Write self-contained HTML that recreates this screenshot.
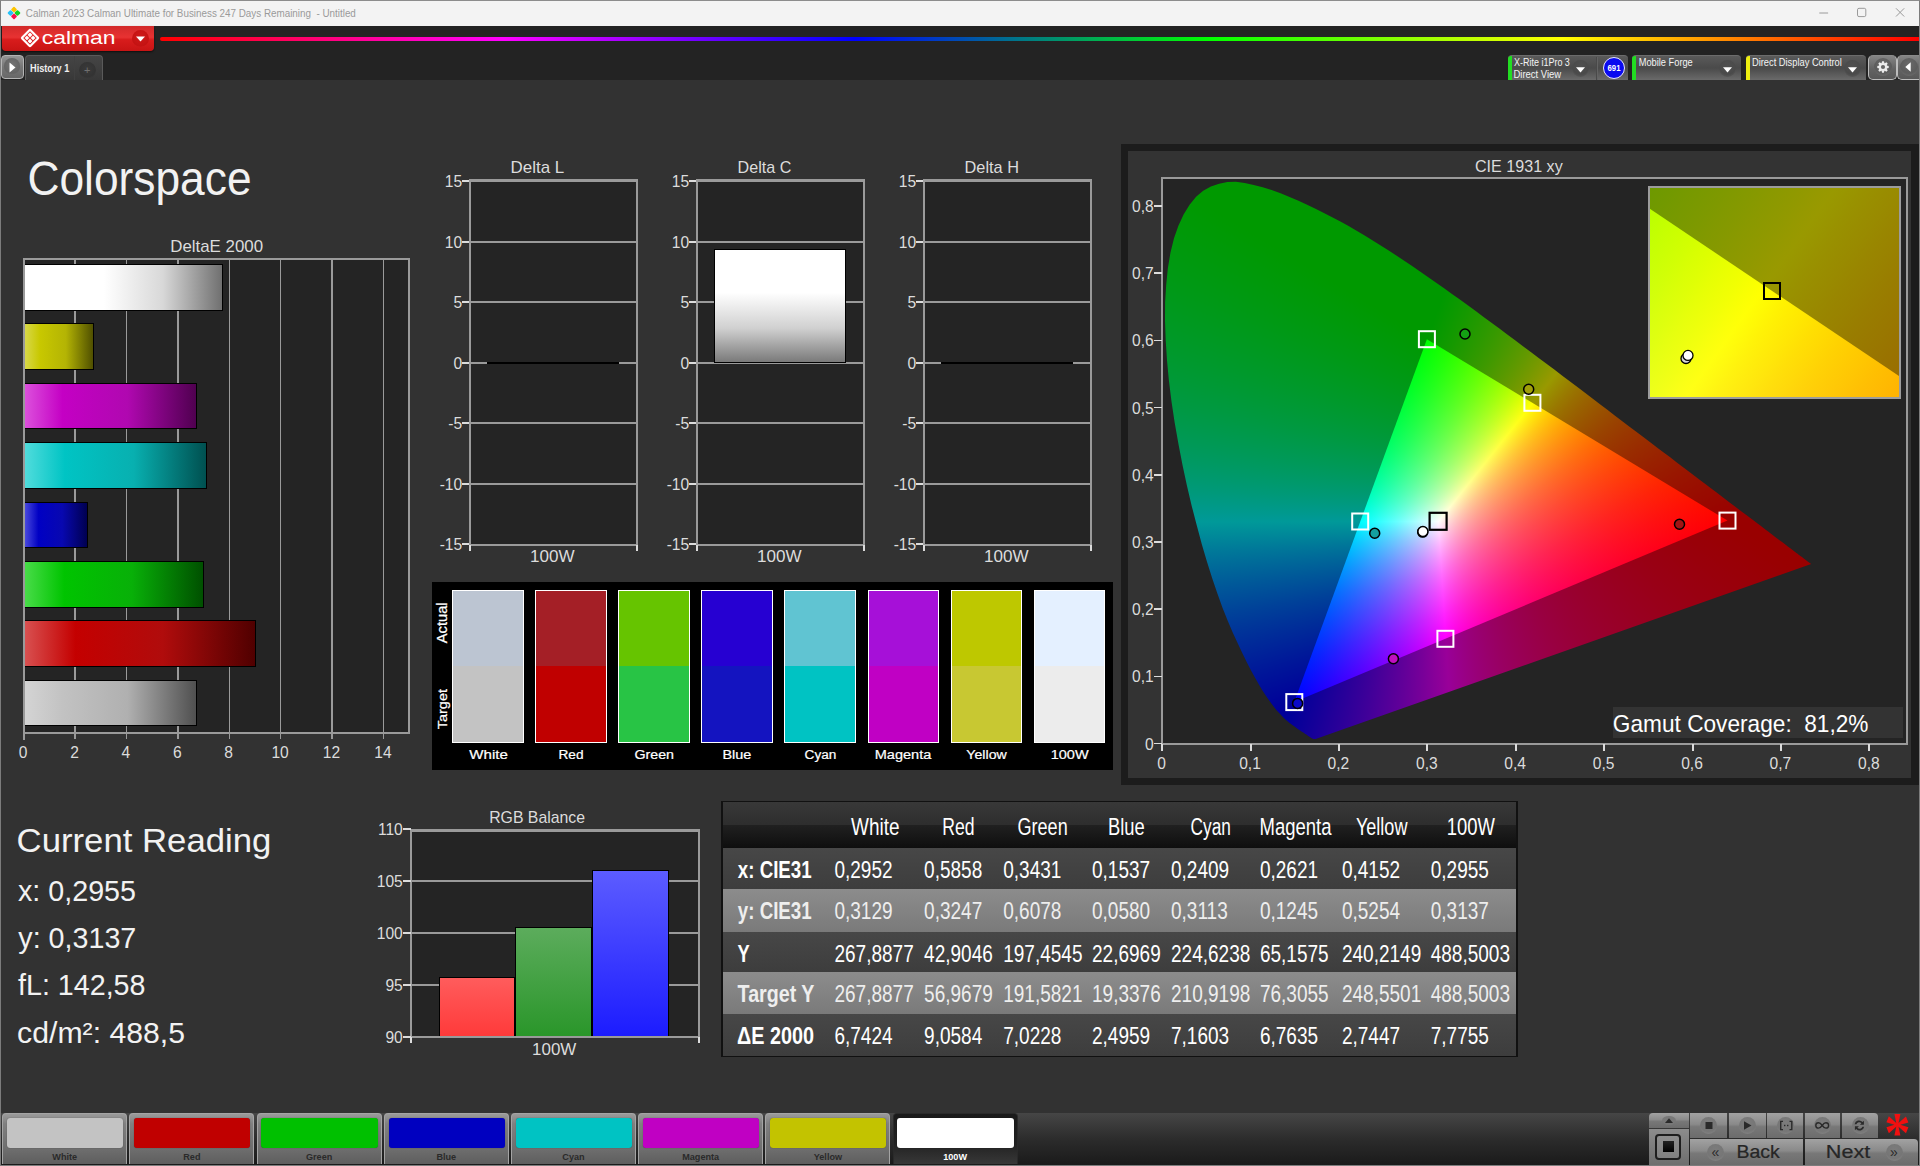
<!DOCTYPE html><html><head><meta charset="utf-8"><title>Calman</title><style>html,body{margin:0;padding:0}body{width:1920px;height:1166px;position:relative;overflow:hidden;background:#323232;font-family:"Liberation Sans",sans-serif}body>div,body>svg{position:absolute}svg text{font-family:"Liberation Sans",sans-serif}</style></head><body>
<div style="left:0px;top:0px;width:1920px;height:27px;background:#f3f3f3"></div>
<div style="left:0px;top:26px;width:1920px;height:54px;background:#232323"></div>
<svg style="left:6.4px;top:4.5px" width="16" height="16" viewBox="0 0 16 16"><g transform="translate(8 8) rotate(45)"><rect x="-4.7" y="-4.7" width="4.5" height="4.5" rx=".9" fill="#fcc400"/><rect x="0.2" y="-4.7" width="4.5" height="4.5" rx=".9" fill="#12d424"/><rect x="-4.7" y="0.2" width="4.5" height="4.5" rx=".9" fill="#25c1f8"/><rect x="0.2" y="0.2" width="4.5" height="4.5" rx=".9" fill="#f5104e"/></g></svg>
<svg style="left:1800px;top:0" width="120" height="27" viewBox="0 0 120 27" fill="none" stroke="#9a9a9a" stroke-width="1"><path d="M19.3 13h8.8"/><rect x="57.5" y="8.3" width="8.3" height="8.3" rx="1.5"/><path d="M96 8.3l8.2 8.2M104.2 8.3l-8.2 8.2"/></svg>
<div style="left:160px;top:36.5px;width:1759px;height:4.5px;background:linear-gradient(90deg,#f00,#f0f 19.5%,#00f 39.5%,#0f0 59.6%,#ff0 79.7%,#f00);border-radius:2px 0 0 2px"></div>
<div style="left:2px;top:26px;width:152px;height:24.5px;background:linear-gradient(#d22a2a,#e83232 45%,#d81c1c 55%,#c81414);border-radius:0 0 4px 4px;box-shadow:0 1px 2px rgba(0,0,0,.6)"></div>
<svg style="left:17.6px;top:26px" width="24" height="24" viewBox="-12 -12 24 24"><g transform="translate(0 0) rotate(45)" fill="#fff"><rect x="-5.9" y="-5.9" width="11.8" height="11.8" rx=".8" fill="none" stroke="#fff" stroke-width="2.2"/><rect x="-3.9" y="-3.9" width="3.45" height="3.45" rx=".5"/><rect x=".45" y="-3.9" width="3.45" height="3.45" rx=".5"/><rect x="-3.9" y=".45" width="3.45" height="3.45" rx=".5"/><rect x=".45" y=".45" width="3.45" height="3.45" rx=".5"/></g></svg>
<div style="left:131.5px;top:29.7px;width:17px;height:17px;border-radius:50%;background:radial-gradient(circle at 50% 40%,#d01a1a,#c41212 70%,#d83030)"></div>
<svg style="left:135.5px;top:36px" width="9" height="6"><path d="M0 .5h9L4.5 5.6z" fill="#fff"/></svg>
<div style="left:0.5px;top:55px;width:23px;height:24px;background:linear-gradient(#969696,#767676 50%,#686868);border:1px solid #b4b4b4;border-radius:4px;box-sizing:border-box"></div>
<div style="left:3.7px;top:58.3px;width:16.6px;height:16.6px;border-radius:50%;background:radial-gradient(circle at 50% 40%,#747474,#646464 65%,#828282)"></div>
<svg style="left:8.5px;top:61.5px" width="7" height="11"><path d="M.5 .5v10L6.5 5.5z" fill="#fff"/></svg>
<div style="left:25px;top:55px;width:77.5px;height:25px;background:linear-gradient(#454545,#383838);border:1px solid #5a5a5a;border-bottom:none;border-radius:4px 4px 0 0;box-sizing:border-box"></div>
<div style="left:73.5px;top:56px;width:1.5px;height:24px;background:linear-gradient(90deg,#2a2a2a,#565656)"></div>
<div style="left:79px;top:62px;width:16.5px;height:16.5px;border-radius:50%;background:radial-gradient(circle at 50% 40%,#3a3a3a,#333 60%,#444)"></div>
<div style="left:1507.5px;top:55px;width:120px;height:25px;background:linear-gradient(#5a5a5a,#4a4a4a 50%,#6a6a6a);border-radius:4px 4px 0 0;border-top:1px solid #6c6c6c;box-sizing:border-box"></div>
<div style="left:1507.5px;top:56px;width:4.5px;height:24px;background:#22dd22;border-radius:3px 0 0 0"></div>
<div style="left:1631.5px;top:55px;width:109.5px;height:25px;background:linear-gradient(#5a5a5a,#4a4a4a 50%,#6a6a6a);border-radius:4px 4px 0 0;border-top:1px solid #6c6c6c;box-sizing:border-box"></div>
<div style="left:1631.5px;top:56px;width:4.5px;height:24px;background:#22dd22;border-radius:3px 0 0 0"></div>
<div style="left:1745.5px;top:55px;width:120.5px;height:25px;background:linear-gradient(#5a5a5a,#4a4a4a 50%,#6a6a6a);border-radius:4px 4px 0 0;border-top:1px solid #6c6c6c;box-sizing:border-box"></div>
<div style="left:1745.5px;top:56px;width:4.5px;height:24px;background:#eeee10;border-radius:3px 0 0 0"></div>
<div style="left:1572px;top:59.5px;width:17px;height:17px;border-radius:50%;background:radial-gradient(circle at 50% 35%,#505050,#4a4a4a 60%,#666)"></div>
<svg style="left:1576px;top:67px" width="9" height="6"><path d="M0 .3h9L4.5 5.4z" fill="#fff"/></svg>
<div style="left:1718.5px;top:59.5px;width:17px;height:17px;border-radius:50%;background:radial-gradient(circle at 50% 35%,#505050,#4a4a4a 60%,#666)"></div>
<svg style="left:1722.5px;top:67px" width="9" height="6"><path d="M0 .3h9L4.5 5.4z" fill="#fff"/></svg>
<div style="left:1844px;top:59.5px;width:17px;height:17px;border-radius:50%;background:radial-gradient(circle at 50% 35%,#505050,#4a4a4a 60%,#666)"></div>
<svg style="left:1848px;top:67px" width="9" height="6"><path d="M0 .3h9L4.5 5.4z" fill="#fff"/></svg>
<div style="left:1596px;top:57px;width:1.5px;height:23px;background:linear-gradient(90deg,#3c3c3c,#707070)"></div>
<div style="left:1603px;top:57px;width:22px;height:22px;border-radius:50%;background:#0a0af0;border:1.5px solid #e8e8ff;box-sizing:border-box"></div>
<div style="left:1868px;top:55px;width:29px;height:24.5px;background:linear-gradient(#858585,#636363 55%,#585858);border:1px solid #bdbdbd;border-top-color:#8a8a8a;border-radius:5px;box-sizing:border-box"></div>
<div style="left:1873.5px;top:58px;width:18px;height:18px;border-radius:50%;background:radial-gradient(circle at 50% 35%,#6a6a6a,#5c5c5c 60%,#787878)"></div>
<svg style="left:1873.5px;top:58px" width="18" height="18"><g transform="translate(9 9)" fill="#ececec"><path d="M-1.5 -3.5L-.9 -5.7h1.8L1.5 -3.5z" transform="rotate(0)"/><path d="M-1.5 -3.5L-.9 -5.7h1.8L1.5 -3.5z" transform="rotate(45)"/><path d="M-1.5 -3.5L-.9 -5.7h1.8L1.5 -3.5z" transform="rotate(90)"/><path d="M-1.5 -3.5L-.9 -5.7h1.8L1.5 -3.5z" transform="rotate(135)"/><path d="M-1.5 -3.5L-.9 -5.7h1.8L1.5 -3.5z" transform="rotate(180)"/><path d="M-1.5 -3.5L-.9 -5.7h1.8L1.5 -3.5z" transform="rotate(225)"/><path d="M-1.5 -3.5L-.9 -5.7h1.8L1.5 -3.5z" transform="rotate(270)"/><path d="M-1.5 -3.5L-.9 -5.7h1.8L1.5 -3.5z" transform="rotate(315)"/><circle r="4.1"/><circle r="2.1" fill="#666"/></g></svg>
<div style="left:1897px;top:55px;width:22.5px;height:24.5px;background:linear-gradient(#858585,#636363 55%,#585858);border:1px solid #bdbdbd;border-top-color:#8a8a8a;border-right:none;border-radius:5px 0 0 5px;box-sizing:border-box"></div>
<div style="left:1899.5px;top:58px;width:18px;height:18px;border-radius:50%;background:radial-gradient(circle at 50% 35%,#6a6a6a,#5c5c5c 60%,#787878)"></div>
<svg style="left:1905.2px;top:62px" width="6" height="10"><path d="M5.7 .3v9.4L.3 5z" fill="#fff"/></svg>
<div style="left:23px;top:257.5px;width:387px;height:476px;background:#242424;border:2px solid #9a9a9a;box-sizing:border-box"></div>
<div style="left:74.3px;top:259px;width:1.6px;height:480px;background:#9a9a9a"></div>
<div style="left:125.7px;top:259px;width:1.6px;height:480px;background:#9a9a9a"></div>
<div style="left:177.1px;top:259px;width:1.6px;height:480px;background:#9a9a9a"></div>
<div style="left:228.5px;top:259px;width:1.6px;height:480px;background:#9a9a9a"></div>
<div style="left:279.9px;top:259px;width:1.6px;height:480px;background:#9a9a9a"></div>
<div style="left:331.3px;top:259px;width:1.6px;height:480px;background:#9a9a9a"></div>
<div style="left:382.7px;top:259px;width:1.6px;height:480px;background:#9a9a9a"></div>
<div style="left:23px;top:733px;width:2px;height:6.5px;background:#9a9a9a"></div>
<div style="left:25px;top:264px;width:198.23px;height:46.5px;background:linear-gradient(90deg,#ffffff,#ffffff 40%,#d8d8d8 70%,#707070);border:1.6px solid #000;border-left:none;box-sizing:border-box"></div>
<div style="left:25px;top:323.4px;width:68.9388px;height:46.5px;background:linear-gradient(90deg,#d8d848,#c8c800 22%,#b4b404 60%,#505000);border:1.6px solid #000;border-left:none;box-sizing:border-box"></div>
<div style="left:25px;top:382.8px;width:172.222px;height:46.5px;background:linear-gradient(90deg,#dc50dc,#c400c4 22%,#b008b0 60%,#500050);border:1.6px solid #000;border-left:none;box-sizing:border-box"></div>
<div style="left:25px;top:442.2px;width:182.42px;height:46.5px;background:linear-gradient(90deg,#50dcdc,#00c4c4 22%,#08b0b0 60%,#005050);border:1.6px solid #000;border-left:none;box-sizing:border-box"></div>
<div style="left:25px;top:501.6px;width:62.5446px;height:46.5px;background:linear-gradient(90deg,#4848dc,#0000c4 22%,#0808b0 60%,#000050);border:1.6px solid #000;border-left:none;box-sizing:border-box"></div>
<div style="left:25px;top:561px;width:178.886px;height:46.5px;background:linear-gradient(90deg,#48dc48,#00c400 22%,#08b008 60%,#005000);border:1.6px solid #000;border-left:none;box-sizing:border-box"></div>
<div style="left:25px;top:620.4px;width:231.201px;height:46.5px;background:linear-gradient(90deg,#d85050,#c40000 22%,#b00c0c 60%,#500000);border:1.6px solid #000;border-left:none;box-sizing:border-box"></div>
<div style="left:25px;top:679.8px;width:171.68px;height:46.5px;background:linear-gradient(90deg,#d4d4d4,#c2c2c2 22%,#b0b0b0 60%,#505050);border:1.6px solid #000;border-left:none;box-sizing:border-box"></div>
<div style="left:468.5px;top:180px;width:169.5px;height:365.5px;background:#242424;border:2px solid #9a9a9a;border-top-width:3px;box-sizing:border-box;top:178.5px;height:367px"></div>
<div style="left:469.5px;top:240.9px;width:167.5px;height:2px;background:#9a9a9a"></div>
<div style="left:469.5px;top:301.35px;width:167.5px;height:2px;background:#9a9a9a"></div>
<div style="left:469.5px;top:361.8px;width:167.5px;height:2px;background:#9a9a9a"></div>
<div style="left:469.5px;top:422.25px;width:167.5px;height:2px;background:#9a9a9a"></div>
<div style="left:469.5px;top:482.7px;width:167.5px;height:2px;background:#9a9a9a"></div>
<div style="left:462px;top:180.45px;width:7px;height:2px;background:#dcdcdc"></div>
<div style="left:462px;top:240.9px;width:7px;height:2px;background:#dcdcdc"></div>
<div style="left:462px;top:301.35px;width:7px;height:2px;background:#dcdcdc"></div>
<div style="left:462px;top:361.8px;width:7px;height:2px;background:#dcdcdc"></div>
<div style="left:462px;top:422.25px;width:7px;height:2px;background:#dcdcdc"></div>
<div style="left:462px;top:482.7px;width:7px;height:2px;background:#dcdcdc"></div>
<div style="left:462px;top:543.15px;width:7px;height:2px;background:#dcdcdc"></div>
<div style="left:468.5px;top:545px;width:2px;height:6px;background:#dcdcdc"></div>
<div style="left:636px;top:545px;width:2px;height:6px;background:#dcdcdc"></div>
<div style="left:487px;top:361.8px;width:132px;height:2.2px;background:#000"></div>
<div style="left:695.5px;top:180px;width:169.5px;height:365.5px;background:#242424;border:2px solid #9a9a9a;border-top-width:3px;box-sizing:border-box;top:178.5px;height:367px"></div>
<div style="left:696.5px;top:240.9px;width:167.5px;height:2px;background:#9a9a9a"></div>
<div style="left:696.5px;top:301.35px;width:167.5px;height:2px;background:#9a9a9a"></div>
<div style="left:696.5px;top:361.8px;width:167.5px;height:2px;background:#9a9a9a"></div>
<div style="left:696.5px;top:422.25px;width:167.5px;height:2px;background:#9a9a9a"></div>
<div style="left:696.5px;top:482.7px;width:167.5px;height:2px;background:#9a9a9a"></div>
<div style="left:689px;top:180.45px;width:7px;height:2px;background:#dcdcdc"></div>
<div style="left:689px;top:240.9px;width:7px;height:2px;background:#dcdcdc"></div>
<div style="left:689px;top:301.35px;width:7px;height:2px;background:#dcdcdc"></div>
<div style="left:689px;top:361.8px;width:7px;height:2px;background:#dcdcdc"></div>
<div style="left:689px;top:422.25px;width:7px;height:2px;background:#dcdcdc"></div>
<div style="left:689px;top:482.7px;width:7px;height:2px;background:#dcdcdc"></div>
<div style="left:689px;top:543.15px;width:7px;height:2px;background:#dcdcdc"></div>
<div style="left:695.5px;top:545px;width:2px;height:6px;background:#dcdcdc"></div>
<div style="left:863px;top:545px;width:2px;height:6px;background:#dcdcdc"></div>
<div style="left:714px;top:249.154px;width:132px;height:114.346px;background:linear-gradient(#fff,#fff 38%,#d0d0d0 70%,#7a7a7a);border:1.3px solid #000;box-sizing:border-box"></div>
<div style="left:922.5px;top:180px;width:169.5px;height:365.5px;background:#242424;border:2px solid #9a9a9a;border-top-width:3px;box-sizing:border-box;top:178.5px;height:367px"></div>
<div style="left:923.5px;top:240.9px;width:167.5px;height:2px;background:#9a9a9a"></div>
<div style="left:923.5px;top:301.35px;width:167.5px;height:2px;background:#9a9a9a"></div>
<div style="left:923.5px;top:361.8px;width:167.5px;height:2px;background:#9a9a9a"></div>
<div style="left:923.5px;top:422.25px;width:167.5px;height:2px;background:#9a9a9a"></div>
<div style="left:923.5px;top:482.7px;width:167.5px;height:2px;background:#9a9a9a"></div>
<div style="left:916px;top:180.45px;width:7px;height:2px;background:#dcdcdc"></div>
<div style="left:916px;top:240.9px;width:7px;height:2px;background:#dcdcdc"></div>
<div style="left:916px;top:301.35px;width:7px;height:2px;background:#dcdcdc"></div>
<div style="left:916px;top:361.8px;width:7px;height:2px;background:#dcdcdc"></div>
<div style="left:916px;top:422.25px;width:7px;height:2px;background:#dcdcdc"></div>
<div style="left:916px;top:482.7px;width:7px;height:2px;background:#dcdcdc"></div>
<div style="left:916px;top:543.15px;width:7px;height:2px;background:#dcdcdc"></div>
<div style="left:922.5px;top:545px;width:2px;height:6px;background:#dcdcdc"></div>
<div style="left:1090px;top:545px;width:2px;height:6px;background:#dcdcdc"></div>
<div style="left:941px;top:361.8px;width:132px;height:2.2px;background:#000"></div>
<div style="left:432px;top:582px;width:680.5px;height:187.5px;background:#000"></div>
<div style="left:452px;top:590px;width:71.5px;height:153px;background:linear-gradient(#bcc5d2,#bcc5d2 50%,#c3c3c3 50%);border:1.5px solid #fff;box-sizing:border-box"></div>
<div style="left:535.1px;top:590px;width:71.5px;height:153px;background:linear-gradient(#a41f26,#a41f26 50%,#c00000 50%);border:1.5px solid #fff;box-sizing:border-box"></div>
<div style="left:618.2px;top:590px;width:71.5px;height:153px;background:linear-gradient(#66c400,#66c400 50%,#28c445 50%);border:1.5px solid #fff;box-sizing:border-box"></div>
<div style="left:701.3px;top:590px;width:71.5px;height:153px;background:linear-gradient(#2600d2,#2600d2 50%,#1414c0 50%);border:1.5px solid #fff;box-sizing:border-box"></div>
<div style="left:784.4px;top:590px;width:71.5px;height:153px;background:linear-gradient(#60c4d2,#60c4d2 50%,#00c3c3 50%);border:1.5px solid #fff;box-sizing:border-box"></div>
<div style="left:867.5px;top:590px;width:71.5px;height:153px;background:linear-gradient(#a610d8,#a610d8 50%,#c000c4 50%);border:1.5px solid #fff;box-sizing:border-box"></div>
<div style="left:950.6px;top:590px;width:71.5px;height:153px;background:linear-gradient(#bec800,#bec800 50%,#c8c832 50%);border:1.5px solid #fff;box-sizing:border-box"></div>
<div style="left:1033.7px;top:590px;width:71.5px;height:153px;background:linear-gradient(#e4f0ff,#e4f0ff 50%,#ececec 50%);border:1.5px solid #fff;box-sizing:border-box"></div>
<div style="left:1120.5px;top:143.5px;width:798.5px;height:641.5px;background:#333;border:7.5px solid #1c1c1c;border-right-width:8.7px;box-sizing:border-box"></div>
<div style="left:1161px;top:177px;width:1747px;height:568px;background:#242424;border:2px solid #9a9a9a;box-sizing:border-box;width:747px"></div>
<div style="left:1149.6px;top:168.8px;width:760px;height:590px;background:linear-gradient(#999,#999),conic-gradient(from 223.67deg at 144.7px 533.3px,#00ffff 156.40deg,#12ffff 158.31deg,#24ffff 160.10deg,#37ffff 161.79deg,#49ffff 163.36deg,#5bffff 164.85deg,#6dffff 166.24deg,#80ffff 167.55deg,#92ffff 168.78deg,#a4ffff 169.94deg,#b6ffff 171.03deg,#c8ffff 172.06deg,#dbffff 173.04deg,#edffff 173.96deg,#ffffff 174.83deg,#ffedff 175.72deg,#ffdbff 176.70deg,#ffc8ff 177.77deg,#ffb6ff 178.95deg,#ffa4ff 180.27deg,#ff92ff 181.74deg,#ff80ff 183.39deg,#ff6dff 185.25deg,#ff5bff 187.36deg,#ff49ff 189.76deg,#ff37ff 192.52deg,#ff24ff 195.69deg,#ff12ff 199.35deg,#ff00ff 203.60deg),conic-gradient(from 94.20deg at 577.9px 351.8px,#ff00ff 153.08deg,#ff12ff 155.45deg,#ff24ff 157.67deg,#ff37ff 159.76deg,#ff49ff 161.71deg,#ff5bff 163.54deg,#ff6dff 165.26deg,#ff80ff 166.86deg,#ff92ff 168.37deg,#ffa4ff 169.78deg,#ffb6ff 171.11deg,#ffc8ff 172.36deg,#ffdbff 173.53deg,#ffedff 174.63deg,#ffffff 175.67deg,#ffffed 176.73deg,#ffffdb 177.88deg,#ffffc8 179.14deg,#ffffb6 180.53deg,#ffffa4 182.06deg,#ffff92 183.75deg,#ffff80 185.63deg,#ffff6d 187.72deg,#ffff5b 190.06deg,#ffff49 192.69deg,#ffff37 195.64deg,#ffff24 198.96deg,#ffff12 202.71deg,#ffff00 206.92deg),conic-gradient(from 340.60deg at 277.3px 170.4px,#ffff00 140.52deg,#ffff12 148.50deg,#ffff24 155.78deg,#ffff37 162.25deg,#ffff49 167.91deg,#ffff5b 172.80deg,#ffff6d 177.01deg,#ffff80 180.64deg,#ffff92 183.78deg,#ffffa4 186.50deg,#ffffb6 188.88deg,#ffffc8 190.96deg,#ffffdb 192.80deg,#ffffed 194.43deg,#ffffff 195.88deg,#edffff 197.27deg,#dbffff 198.72deg,#c8ffff 200.21deg,#b6ffff 201.74deg,#a4ffff 203.32deg,#92ffff 204.95deg,#80ffff 206.62deg,#6dffff 208.34deg,#5bffff 210.10deg,#49ffff 211.91deg,#37ffff 213.75deg,#24ffff 215.63deg,#12ffff 217.54deg,#00ffff 219.48deg),#fff;background-blend-mode:multiply,darken,darken,darken;clip-path:polygon(166.0px 570.2px,163.6px 570.2px,163.4px 570.1px,163.2px 570.0px,162.9px 569.8px,162.6px 569.7px,162.4px 569.5px,162.1px 569.4px,161.8px 569.2px,161.4px 569.0px,161.0px 568.7px,160.6px 568.4px,160.1px 568.1px,159.6px 567.8px,159.1px 567.5px,158.6px 567.1px,158.0px 566.7px,157.4px 566.3px,156.8px 565.8px,156.1px 565.4px,155.3px 564.9px,154.5px 564.3px,153.6px 563.7px,152.7px 563.1px,151.6px 562.4px,150.5px 561.7px,149.4px 560.9px,148.2px 560.2px,146.9px 559.3px,145.6px 558.3px,144.2px 557.3px,142.7px 556.2px,141.1px 555.0px,139.4px 553.6px,137.7px 552.2px,135.9px 550.7px,134.0px 548.9px,131.9px 546.8px,129.6px 544.3px,127.2px 541.6px,124.6px 538.4px,121.8px 534.8px,118.9px 530.7px,115.8px 526.2px,112.5px 521.1px,109.0px 515.3px,105.3px 508.7px,101.3px 501.5px,97.2px 493.4px,92.8px 484.4px,88.1px 474.5px,83.1px 463.6px,78.0px 451.7px,72.8px 438.7px,67.7px 424.5px,62.5px 409.1px,57.3px 392.7px,52.2px 375.4px,47.2px 356.8px,42.1px 337.1px,37.3px 316.8px,32.9px 296.3px,28.9px 275.4px,25.1px 254.0px,21.9px 232.6px,19.3px 211.8px,17.4px 191.5px,16.1px 171.4px,15.4px 152.0px,15.5px 133.6px,16.6px 116.0px,18.3px 99.2px,20.9px 83.6px,24.4px 69.5px,28.8px 56.9px,34.0px 45.6px,40.0px 35.9px,46.5px 27.9px,53.6px 21.9px,61.3px 17.7px,69.5px 14.9px,77.8px 13.3px,86.3px 13.0px,95.1px 14.1px,104.1px 16.1px,113.1px 18.4px,122.0px 21.1px,131.0px 24.5px,140.0px 28.2px,148.9px 32.0px,157.5px 35.9px,165.9px 39.9px,174.3px 44.1px,182.6px 48.4px,190.8px 52.8px,199.0px 57.3px,207.0px 61.9px,215.1px 66.7px,223.1px 71.6px,231.1px 76.6px,239.1px 81.7px,247.1px 86.9px,255.0px 92.1px,262.9px 97.5px,270.8px 102.9px,278.7px 108.4px,286.6px 113.9px,294.5px 119.5px,302.4px 125.1px,310.3px 130.8px,318.2px 136.5px,326.1px 142.3px,334.0px 148.1px,341.9px 153.9px,349.8px 159.8px,357.7px 165.6px,365.5px 171.5px,373.4px 177.4px,381.2px 183.3px,389.1px 189.1px,396.9px 195.0px,404.7px 200.8px,412.4px 206.7px,420.1px 212.5px,427.8px 218.3px,435.4px 224.0px,442.9px 229.7px,450.4px 235.4px,457.8px 241.0px,465.1px 246.6px,472.4px 252.1px,479.6px 257.6px,486.7px 263.0px,493.7px 268.2px,500.6px 273.5px,507.4px 278.6px,514.1px 283.6px,520.6px 288.5px,526.9px 293.4px,533.2px 298.1px,539.2px 302.7px,545.1px 307.2px,550.7px 311.4px,556.1px 315.5px,561.3px 319.4px,566.4px 323.3px,571.3px 327.0px,576.1px 330.6px,580.7px 334.1px,585.1px 337.5px,589.3px 340.6px,593.3px 343.6px,597.1px 346.4px,600.7px 349.2px,604.1px 351.7px,607.3px 354.2px,610.4px 356.5px,613.3px 358.8px,616.1px 360.9px,618.6px 362.8px,621.1px 364.7px,623.4px 366.4px,625.6px 368.1px,627.6px 369.6px,629.6px 371.1px,631.4px 372.5px,633.2px 373.8px,634.8px 375.0px,636.4px 376.2px,637.9px 377.4px,639.3px 378.5px,640.7px 379.5px,642.0px 380.5px,643.3px 381.5px,644.5px 382.4px,645.6px 383.2px,646.7px 384.1px,647.7px 384.8px,648.7px 385.6px,649.6px 386.2px,650.4px 386.9px,651.2px 387.5px,652.0px 388.0px,652.7px 388.5px,653.3px 389.0px,653.9px 389.5px,654.4px 389.9px,655.0px 390.3px,655.5px 390.7px,655.9px 391.0px,656.4px 391.4px,656.8px 391.7px,657.2px 392.0px,657.4px 392.2px,661.6px 395.3px)"></div>
<div style="left:1149.6px;top:168.8px;width:760px;height:590px;background:conic-gradient(from 223.67deg at 144.7px 533.3px,#00ffff 156.40deg,#12ffff 158.31deg,#24ffff 160.10deg,#37ffff 161.79deg,#49ffff 163.36deg,#5bffff 164.85deg,#6dffff 166.24deg,#80ffff 167.55deg,#92ffff 168.78deg,#a4ffff 169.94deg,#b6ffff 171.03deg,#c8ffff 172.06deg,#dbffff 173.04deg,#edffff 173.96deg,#ffffff 174.83deg,#ffedff 175.72deg,#ffdbff 176.70deg,#ffc8ff 177.77deg,#ffb6ff 178.95deg,#ffa4ff 180.27deg,#ff92ff 181.74deg,#ff80ff 183.39deg,#ff6dff 185.25deg,#ff5bff 187.36deg,#ff49ff 189.76deg,#ff37ff 192.52deg,#ff24ff 195.69deg,#ff12ff 199.35deg,#ff00ff 203.60deg),conic-gradient(from 94.20deg at 577.9px 351.8px,#ff00ff 153.08deg,#ff12ff 155.45deg,#ff24ff 157.67deg,#ff37ff 159.76deg,#ff49ff 161.71deg,#ff5bff 163.54deg,#ff6dff 165.26deg,#ff80ff 166.86deg,#ff92ff 168.37deg,#ffa4ff 169.78deg,#ffb6ff 171.11deg,#ffc8ff 172.36deg,#ffdbff 173.53deg,#ffedff 174.63deg,#ffffff 175.67deg,#ffffed 176.73deg,#ffffdb 177.88deg,#ffffc8 179.14deg,#ffffb6 180.53deg,#ffffa4 182.06deg,#ffff92 183.75deg,#ffff80 185.63deg,#ffff6d 187.72deg,#ffff5b 190.06deg,#ffff49 192.69deg,#ffff37 195.64deg,#ffff24 198.96deg,#ffff12 202.71deg,#ffff00 206.92deg),conic-gradient(from 340.60deg at 277.3px 170.4px,#ffff00 140.52deg,#ffff12 148.50deg,#ffff24 155.78deg,#ffff37 162.25deg,#ffff49 167.91deg,#ffff5b 172.80deg,#ffff6d 177.01deg,#ffff80 180.64deg,#ffff92 183.78deg,#ffffa4 186.50deg,#ffffb6 188.88deg,#ffffc8 190.96deg,#ffffdb 192.80deg,#ffffed 194.43deg,#ffffff 195.88deg,#edffff 197.27deg,#dbffff 198.72deg,#c8ffff 200.21deg,#b6ffff 201.74deg,#a4ffff 203.32deg,#92ffff 204.95deg,#80ffff 206.62deg,#6dffff 208.34deg,#5bffff 210.10deg,#49ffff 211.91deg,#37ffff 213.75deg,#24ffff 215.63deg,#12ffff 217.54deg,#00ffff 219.48deg),#fff;background-blend-mode:darken,darken,darken;clip-path:polygon(577.9px 351.8px,277.3px 170.4px,144.7px 533.3px)"></div>
<div style="left:1161.1px;top:744px;width:2px;height:7px;background:#dcdcdc"></div>
<div style="left:1154px;top:742.8px;width:8px;height:1.6px;background:#dcdcdc"></div>
<div style="left:1249.5px;top:744px;width:2px;height:7px;background:#dcdcdc"></div>
<div style="left:1154px;top:675.6px;width:8px;height:1.6px;background:#dcdcdc"></div>
<div style="left:1337.9px;top:744px;width:2px;height:7px;background:#dcdcdc"></div>
<div style="left:1154px;top:608.4px;width:8px;height:1.6px;background:#dcdcdc"></div>
<div style="left:1426.3px;top:744px;width:2px;height:7px;background:#dcdcdc"></div>
<div style="left:1154px;top:541.2px;width:8px;height:1.6px;background:#dcdcdc"></div>
<div style="left:1514.7px;top:744px;width:2px;height:7px;background:#dcdcdc"></div>
<div style="left:1154px;top:474px;width:8px;height:1.6px;background:#dcdcdc"></div>
<div style="left:1603.1px;top:744px;width:2px;height:7px;background:#dcdcdc"></div>
<div style="left:1154px;top:406.8px;width:8px;height:1.6px;background:#dcdcdc"></div>
<div style="left:1691.5px;top:744px;width:2px;height:7px;background:#dcdcdc"></div>
<div style="left:1154px;top:339.6px;width:8px;height:1.6px;background:#dcdcdc"></div>
<div style="left:1779.9px;top:744px;width:2px;height:7px;background:#dcdcdc"></div>
<div style="left:1154px;top:272.4px;width:8px;height:1.6px;background:#dcdcdc"></div>
<div style="left:1868.3px;top:744px;width:2px;height:7px;background:#dcdcdc"></div>
<div style="left:1154px;top:205.2px;width:8px;height:1.6px;background:#dcdcdc"></div>
<div style="left:1648px;top:186px;width:252.5px;height:213px;background:linear-gradient(#999,#999),conic-gradient(from 221.61deg at -1240.3px 1997.0px,#00ffff 156.58deg,#06ffff 157.21deg,#0dffff 157.83deg,#13ffff 158.43deg,#19ffff 159.02deg,#20ffff 159.60deg,#26ffff 160.17deg,#2dffff 160.72deg,#33ffff 161.26deg,#39ffff 161.80deg,#40ffff 162.32deg,#46ffff 162.83deg,#4dffff 163.33deg,#53ffff 163.82deg,#59ffff 164.30deg,#60ffff 164.77deg,#66ffff 165.23deg,#6cffff 165.68deg,#73ffff 166.13deg,#79ffff 166.56deg,#80ffff 166.99deg,#86ffff 167.40deg,#8cffff 167.81deg,#93ffff 168.21deg,#99ffff 168.61deg,#9fffff 168.99deg,#a6ffff 169.37deg,#acffff 169.74deg,#b2ffff 170.10deg,#b9ffff 170.46deg,#bfffff 170.81deg,#c6ffff 171.15deg,#ccffff 171.49deg,#d2ffff 171.82deg,#d9ffff 172.15deg,#dfffff 172.47deg,#e6ffff 172.78deg,#ecffff 173.09deg,#f2ffff 173.39deg,#f9ffff 173.68deg,#ffffff 173.98deg,#fff9ff 174.27deg,#fff2ff 174.57deg,#ffecff 174.88deg,#ffe6ff 175.21deg,#ffdfff 175.54deg,#ffd9ff 175.89deg,#ffd2ff 176.25deg,#ffccff 176.62deg,#ffc6ff 177.01deg,#ffbfff 177.41deg,#ffb9ff 177.83deg,#ffb2ff 178.26deg,#ffacff 178.71deg,#ffa6ff 179.17deg,#ff9fff 179.66deg,#ff99ff 180.17deg,#ff93ff 180.69deg,#ff8cff 181.25deg,#ff86ff 181.82deg,#ff80ff 182.42deg,#ff79ff 183.05deg,#ff73ff 183.70deg,#ff6cff 184.39deg,#ff66ff 185.11deg,#ff60ff 185.86deg,#ff59ff 186.66deg,#ff53ff 187.49deg,#ff4cff 188.36deg,#ff46ff 189.28deg,#ff40ff 190.25deg,#ff39ff 191.26deg,#ff33ff 192.34deg,#ff2dff 193.47deg,#ff26ff 194.67deg,#ff20ff 195.93deg,#ff1aff 197.26deg,#ff13ff 198.67deg,#ff0dff 200.17deg,#ff06ff 201.75deg,#ff00ff 203.42deg),conic-gradient(from 94.45deg at 1229.3px 846.8px,#ff00ff 150.58deg,#ff06ff 151.49deg,#ff0dff 152.38deg,#ff13ff 153.26deg,#ff19ff 154.12deg,#ff20ff 154.96deg,#ff26ff 155.78deg,#ff2dff 156.59deg,#ff33ff 157.38deg,#ff39ff 158.15deg,#ff40ff 158.90deg,#ff46ff 159.64deg,#ff4dff 160.37deg,#ff53ff 161.08deg,#ff59ff 161.77deg,#ff60ff 162.45deg,#ff66ff 163.11deg,#ff6cff 163.76deg,#ff73ff 164.40deg,#ff79ff 165.02deg,#ff80ff 165.63deg,#ff86ff 166.22deg,#ff8cff 166.81deg,#ff93ff 167.38deg,#ff99ff 167.93deg,#ff9fff 168.48deg,#ffa6ff 169.01deg,#ffacff 169.54deg,#ffb2ff 170.05deg,#ffb9ff 170.55deg,#ffbfff 171.04deg,#ffc6ff 171.52deg,#ffccff 171.98deg,#ffd2ff 172.44deg,#ffd9ff 172.89deg,#ffdfff 173.33deg,#ffe6ff 173.77deg,#ffecff 174.19deg,#fff2ff 174.60deg,#fff9ff 175.01deg,#ffffff 175.40deg,#fffff9 175.80deg,#fffff2 176.21deg,#ffffec 176.64deg,#ffffe6 177.08deg,#ffffdf 177.53deg,#ffffd9 177.99deg,#ffffd2 178.47deg,#ffffcc 178.97deg,#ffffc6 179.48deg,#ffffbf 180.01deg,#ffffb9 180.56deg,#ffffb2 181.13deg,#ffffac 181.71deg,#ffffa6 182.32deg,#ffff9f 182.95deg,#ffff99 183.60deg,#ffff93 184.27deg,#ffff8c 184.97deg,#ffff86 185.69deg,#ffff80 186.45deg,#ffff79 187.23deg,#ffff73 188.04deg,#ffff6c 188.88deg,#ffff66 189.75deg,#ffff60 190.66deg,#ffff59 191.60deg,#ffff53 192.58deg,#ffff4c 193.60deg,#ffff46 194.65deg,#ffff40 195.76deg,#ffff39 196.90deg,#ffff33 198.09deg,#ffff2d 199.33deg,#ffff26 200.61deg,#ffff20 201.95deg,#ffff1a 203.33deg,#ffff13 204.77deg,#ffff0d 206.27deg,#ffff06 207.82deg,#ffff00 209.42deg),conic-gradient(from 341.03deg at -484.3px -303.4px,#ffff00 142.84deg,#ffff06 145.81deg,#ffff0d 148.69deg,#ffff13 151.45deg,#ffff19 154.10deg,#ffff20 156.63deg,#ffff26 159.04deg,#ffff2d 161.33deg,#ffff33 163.51deg,#ffff39 165.57deg,#ffff40 167.51deg,#ffff46 169.35deg,#ffff4d 171.09deg,#ffff53 172.74deg,#ffff59 174.29deg,#ffff60 175.76deg,#ffff66 177.14deg,#ffff6c 178.45deg,#ffff73 179.69deg,#ffff79 180.87deg,#ffff80 181.98deg,#ffff86 183.03deg,#ffff8c 184.03deg,#ffff93 184.98deg,#ffff99 185.88deg,#ffff9f 186.74deg,#ffffa6 187.55deg,#ffffac 188.33deg,#ffffb2 189.07deg,#ffffb9 189.78deg,#ffffbf 190.45deg,#ffffc6 191.10deg,#ffffcc 191.71deg,#ffffd2 192.30deg,#ffffd9 192.86deg,#ffffdf 193.40deg,#ffffe6 193.92deg,#ffffec 194.42deg,#fffff2 194.90deg,#fffff9 195.36deg,#ffffff 195.80deg,#f9ffff 196.23deg,#f2ffff 196.67deg,#ecffff 197.12deg,#e6ffff 197.57deg,#dfffff 198.02deg,#d9ffff 198.48deg,#d2ffff 198.95deg,#ccffff 199.42deg,#c6ffff 199.89deg,#bfffff 200.37deg,#b9ffff 200.86deg,#b2ffff 201.35deg,#acffff 201.85deg,#a6ffff 202.35deg,#9fffff 202.86deg,#99ffff 203.37deg,#93ffff 203.89deg,#8cffff 204.41deg,#86ffff 204.94deg,#80ffff 205.47deg,#79ffff 206.01deg,#73ffff 206.55deg,#6cffff 207.10deg,#66ffff 207.65deg,#60ffff 208.21deg,#59ffff 208.77deg,#53ffff 209.34deg,#4cffff 209.92deg,#46ffff 210.49deg,#40ffff 211.08deg,#39ffff 211.67deg,#33ffff 212.26deg,#2dffff 212.86deg,#26ffff 213.46deg,#20ffff 214.06deg,#1affff 214.68deg,#13ffff 215.29deg,#0dffff 215.91deg,#06ffff 216.53deg,#00ffff 217.16deg),#fff;background-blend-mode:multiply,darken,darken,darken"></div>
<div style="left:1648px;top:186px;width:252.5px;height:213px;background:conic-gradient(from 221.61deg at -1240.3px 1997.0px,#00ffff 156.58deg,#06ffff 157.21deg,#0dffff 157.83deg,#13ffff 158.43deg,#19ffff 159.02deg,#20ffff 159.60deg,#26ffff 160.17deg,#2dffff 160.72deg,#33ffff 161.26deg,#39ffff 161.80deg,#40ffff 162.32deg,#46ffff 162.83deg,#4dffff 163.33deg,#53ffff 163.82deg,#59ffff 164.30deg,#60ffff 164.77deg,#66ffff 165.23deg,#6cffff 165.68deg,#73ffff 166.13deg,#79ffff 166.56deg,#80ffff 166.99deg,#86ffff 167.40deg,#8cffff 167.81deg,#93ffff 168.21deg,#99ffff 168.61deg,#9fffff 168.99deg,#a6ffff 169.37deg,#acffff 169.74deg,#b2ffff 170.10deg,#b9ffff 170.46deg,#bfffff 170.81deg,#c6ffff 171.15deg,#ccffff 171.49deg,#d2ffff 171.82deg,#d9ffff 172.15deg,#dfffff 172.47deg,#e6ffff 172.78deg,#ecffff 173.09deg,#f2ffff 173.39deg,#f9ffff 173.68deg,#ffffff 173.98deg,#fff9ff 174.27deg,#fff2ff 174.57deg,#ffecff 174.88deg,#ffe6ff 175.21deg,#ffdfff 175.54deg,#ffd9ff 175.89deg,#ffd2ff 176.25deg,#ffccff 176.62deg,#ffc6ff 177.01deg,#ffbfff 177.41deg,#ffb9ff 177.83deg,#ffb2ff 178.26deg,#ffacff 178.71deg,#ffa6ff 179.17deg,#ff9fff 179.66deg,#ff99ff 180.17deg,#ff93ff 180.69deg,#ff8cff 181.25deg,#ff86ff 181.82deg,#ff80ff 182.42deg,#ff79ff 183.05deg,#ff73ff 183.70deg,#ff6cff 184.39deg,#ff66ff 185.11deg,#ff60ff 185.86deg,#ff59ff 186.66deg,#ff53ff 187.49deg,#ff4cff 188.36deg,#ff46ff 189.28deg,#ff40ff 190.25deg,#ff39ff 191.26deg,#ff33ff 192.34deg,#ff2dff 193.47deg,#ff26ff 194.67deg,#ff20ff 195.93deg,#ff1aff 197.26deg,#ff13ff 198.67deg,#ff0dff 200.17deg,#ff06ff 201.75deg,#ff00ff 203.42deg),conic-gradient(from 94.45deg at 1229.3px 846.8px,#ff00ff 150.58deg,#ff06ff 151.49deg,#ff0dff 152.38deg,#ff13ff 153.26deg,#ff19ff 154.12deg,#ff20ff 154.96deg,#ff26ff 155.78deg,#ff2dff 156.59deg,#ff33ff 157.38deg,#ff39ff 158.15deg,#ff40ff 158.90deg,#ff46ff 159.64deg,#ff4dff 160.37deg,#ff53ff 161.08deg,#ff59ff 161.77deg,#ff60ff 162.45deg,#ff66ff 163.11deg,#ff6cff 163.76deg,#ff73ff 164.40deg,#ff79ff 165.02deg,#ff80ff 165.63deg,#ff86ff 166.22deg,#ff8cff 166.81deg,#ff93ff 167.38deg,#ff99ff 167.93deg,#ff9fff 168.48deg,#ffa6ff 169.01deg,#ffacff 169.54deg,#ffb2ff 170.05deg,#ffb9ff 170.55deg,#ffbfff 171.04deg,#ffc6ff 171.52deg,#ffccff 171.98deg,#ffd2ff 172.44deg,#ffd9ff 172.89deg,#ffdfff 173.33deg,#ffe6ff 173.77deg,#ffecff 174.19deg,#fff2ff 174.60deg,#fff9ff 175.01deg,#ffffff 175.40deg,#fffff9 175.80deg,#fffff2 176.21deg,#ffffec 176.64deg,#ffffe6 177.08deg,#ffffdf 177.53deg,#ffffd9 177.99deg,#ffffd2 178.47deg,#ffffcc 178.97deg,#ffffc6 179.48deg,#ffffbf 180.01deg,#ffffb9 180.56deg,#ffffb2 181.13deg,#ffffac 181.71deg,#ffffa6 182.32deg,#ffff9f 182.95deg,#ffff99 183.60deg,#ffff93 184.27deg,#ffff8c 184.97deg,#ffff86 185.69deg,#ffff80 186.45deg,#ffff79 187.23deg,#ffff73 188.04deg,#ffff6c 188.88deg,#ffff66 189.75deg,#ffff60 190.66deg,#ffff59 191.60deg,#ffff53 192.58deg,#ffff4c 193.60deg,#ffff46 194.65deg,#ffff40 195.76deg,#ffff39 196.90deg,#ffff33 198.09deg,#ffff2d 199.33deg,#ffff26 200.61deg,#ffff20 201.95deg,#ffff1a 203.33deg,#ffff13 204.77deg,#ffff0d 206.27deg,#ffff06 207.82deg,#ffff00 209.42deg),conic-gradient(from 341.03deg at -484.3px -303.4px,#ffff00 142.84deg,#ffff06 145.81deg,#ffff0d 148.69deg,#ffff13 151.45deg,#ffff19 154.10deg,#ffff20 156.63deg,#ffff26 159.04deg,#ffff2d 161.33deg,#ffff33 163.51deg,#ffff39 165.57deg,#ffff40 167.51deg,#ffff46 169.35deg,#ffff4d 171.09deg,#ffff53 172.74deg,#ffff59 174.29deg,#ffff60 175.76deg,#ffff66 177.14deg,#ffff6c 178.45deg,#ffff73 179.69deg,#ffff79 180.87deg,#ffff80 181.98deg,#ffff86 183.03deg,#ffff8c 184.03deg,#ffff93 184.98deg,#ffff99 185.88deg,#ffff9f 186.74deg,#ffffa6 187.55deg,#ffffac 188.33deg,#ffffb2 189.07deg,#ffffb9 189.78deg,#ffffbf 190.45deg,#ffffc6 191.10deg,#ffffcc 191.71deg,#ffffd2 192.30deg,#ffffd9 192.86deg,#ffffdf 193.40deg,#ffffe6 193.92deg,#ffffec 194.42deg,#fffff2 194.90deg,#fffff9 195.36deg,#ffffff 195.80deg,#f9ffff 196.23deg,#f2ffff 196.67deg,#ecffff 197.12deg,#e6ffff 197.57deg,#dfffff 198.02deg,#d9ffff 198.48deg,#d2ffff 198.95deg,#ccffff 199.42deg,#c6ffff 199.89deg,#bfffff 200.37deg,#b9ffff 200.86deg,#b2ffff 201.35deg,#acffff 201.85deg,#a6ffff 202.35deg,#9fffff 202.86deg,#99ffff 203.37deg,#93ffff 203.89deg,#8cffff 204.41deg,#86ffff 204.94deg,#80ffff 205.47deg,#79ffff 206.01deg,#73ffff 206.55deg,#6cffff 207.10deg,#66ffff 207.65deg,#60ffff 208.21deg,#59ffff 208.77deg,#53ffff 209.34deg,#4cffff 209.92deg,#46ffff 210.49deg,#40ffff 211.08deg,#39ffff 211.67deg,#33ffff 212.26deg,#2dffff 212.86deg,#26ffff 213.46deg,#20ffff 214.06deg,#1affff 214.68deg,#13ffff 215.29deg,#0dffff 215.91deg,#06ffff 216.53deg,#00ffff 217.16deg),#fff;background-blend-mode:darken,darken,darken;clip-path:polygon(0 21.6px,252.5px 191.1px,252.5px 213px,0 213px)"></div>
<div style="left:1648px;top:186px;width:252.5px;height:213px;border:2px solid #9c9c9c;box-sizing:border-box"></div>
<div style="left:1613px;top:706.5px;width:289.5px;height:31.5px;background:#333"></div>
<div style="left:410px;top:828.5px;width:289.5px;height:209px;background:#242424;border:2px solid #9a9a9a;border-top-width:3px;box-sizing:border-box"></div>
<div style="left:412px;top:880.2px;width:286px;height:2px;background:#9a9a9a"></div>
<div style="left:412px;top:932px;width:286px;height:2px;background:#9a9a9a"></div>
<div style="left:412px;top:983.8px;width:286px;height:2px;background:#9a9a9a"></div>
<div style="left:403px;top:828.4px;width:8px;height:2px;background:#dcdcdc"></div>
<div style="left:403px;top:880.2px;width:8px;height:2px;background:#dcdcdc"></div>
<div style="left:403px;top:932px;width:8px;height:2px;background:#dcdcdc"></div>
<div style="left:403px;top:983.8px;width:8px;height:2px;background:#dcdcdc"></div>
<div style="left:403px;top:1035.6px;width:8px;height:2px;background:#dcdcdc"></div>
<div style="left:410px;top:1037px;width:2px;height:6px;background:#dcdcdc"></div>
<div style="left:697.5px;top:1037px;width:2px;height:6px;background:#dcdcdc"></div>
<div style="left:438.7px;top:976.6px;width:76.5px;height:59.7px;background:linear-gradient(#ff5c5c,#ff3a3a);border:1.9px solid #000;border-bottom:none;box-sizing:border-box"></div>
<div style="left:515.2px;top:926.6px;width:76.6px;height:109.7px;background:linear-gradient(#5cac5c,#2a962a);border:1.9px solid #000;border-bottom:none;box-sizing:border-box"></div>
<div style="left:591.8px;top:869.9px;width:76.8px;height:166.4px;background:linear-gradient(#5c5cff,#1c1cff);border:1.9px solid #000;border-bottom:none;box-sizing:border-box"></div>
<div style="left:721px;top:800.5px;width:796.5px;height:256.5px;background:#111"></div>
<div style="left:722.5px;top:802px;width:793.5px;height:46px;background:linear-gradient(#383838,#2e2e2e 49%,#202020 51%,#0e0e0e)"></div>
<div style="left:722.5px;top:847.8px;width:793.5px;height:41px;background:linear-gradient(#474747,#3d3d3d)"></div>
<div style="left:722.5px;top:888.8px;width:793.5px;height:42.8px;background:linear-gradient(#8c8c8c,#7a7a7a)"></div>
<div style="left:722.5px;top:931.6px;width:793.5px;height:40.4px;background:linear-gradient(#474747,#3d3d3d)"></div>
<div style="left:722.5px;top:972px;width:793.5px;height:41.8px;background:linear-gradient(#8c8c8c,#7a7a7a)"></div>
<div style="left:722.5px;top:1013.8px;width:793.5px;height:42.2px;background:linear-gradient(#474747,#3d3d3d)"></div>
<div style="left:0px;top:1112.5px;width:1920px;height:52.5px;background:linear-gradient(#464646,#2c2c2c 50%,#1a1a1a)"></div>
<div style="left:2.2px;top:1113px;width:125px;height:51.2px;background:linear-gradient(#9a9a9a,#808080 20%,#6e6e6e 70%,#5e5e5e);border-radius:4px 4px 0 0;border:1px solid #a4a4a4;border-bottom:none;box-sizing:border-box"></div>
<div style="left:6.9px;top:1118px;width:116.3px;height:29.6px;background:#c3c3c3;border-radius:3px;box-shadow:0 0 1px rgba(0,0,0,.5)"></div>
<div style="left:129.4px;top:1113px;width:125px;height:51.2px;background:linear-gradient(#9a9a9a,#808080 20%,#6e6e6e 70%,#5e5e5e);border-radius:4px 4px 0 0;border:1px solid #a4a4a4;border-bottom:none;box-sizing:border-box"></div>
<div style="left:134.1px;top:1118px;width:116.3px;height:29.6px;background:#c00000;border-radius:3px;box-shadow:0 0 1px rgba(0,0,0,.5)"></div>
<div style="left:256.6px;top:1113px;width:125px;height:51.2px;background:linear-gradient(#9a9a9a,#808080 20%,#6e6e6e 70%,#5e5e5e);border-radius:4px 4px 0 0;border:1px solid #a4a4a4;border-bottom:none;box-sizing:border-box"></div>
<div style="left:261.3px;top:1118px;width:116.3px;height:29.6px;background:#00c000;border-radius:3px;box-shadow:0 0 1px rgba(0,0,0,.5)"></div>
<div style="left:383.8px;top:1113px;width:125px;height:51.2px;background:linear-gradient(#9a9a9a,#808080 20%,#6e6e6e 70%,#5e5e5e);border-radius:4px 4px 0 0;border:1px solid #a4a4a4;border-bottom:none;box-sizing:border-box"></div>
<div style="left:388.5px;top:1118px;width:116.3px;height:29.6px;background:#0000c0;border-radius:3px;box-shadow:0 0 1px rgba(0,0,0,.5)"></div>
<div style="left:511px;top:1113px;width:125px;height:51.2px;background:linear-gradient(#9a9a9a,#808080 20%,#6e6e6e 70%,#5e5e5e);border-radius:4px 4px 0 0;border:1px solid #a4a4a4;border-bottom:none;box-sizing:border-box"></div>
<div style="left:515.7px;top:1118px;width:116.3px;height:29.6px;background:#00c3c3;border-radius:3px;box-shadow:0 0 1px rgba(0,0,0,.5)"></div>
<div style="left:638.2px;top:1113px;width:125px;height:51.2px;background:linear-gradient(#9a9a9a,#808080 20%,#6e6e6e 70%,#5e5e5e);border-radius:4px 4px 0 0;border:1px solid #a4a4a4;border-bottom:none;box-sizing:border-box"></div>
<div style="left:642.9px;top:1118px;width:116.3px;height:29.6px;background:#c000c3;border-radius:3px;box-shadow:0 0 1px rgba(0,0,0,.5)"></div>
<div style="left:765.4px;top:1113px;width:125px;height:51.2px;background:linear-gradient(#9a9a9a,#808080 20%,#6e6e6e 70%,#5e5e5e);border-radius:4px 4px 0 0;border:1px solid #a4a4a4;border-bottom:none;box-sizing:border-box"></div>
<div style="left:770.1px;top:1118px;width:116.3px;height:29.6px;background:#c3c300;border-radius:3px;box-shadow:0 0 1px rgba(0,0,0,.5)"></div>
<div style="left:892.6px;top:1113px;width:125px;height:51.2px;background:linear-gradient(#1a1a1a,#222 60%,#383838);border-radius:4px 4px 0 0;border:1px solid #2a2a2a;border-bottom:none;box-sizing:border-box"></div>
<div style="left:897.3px;top:1118px;width:116.3px;height:29.6px;background:#fff;border-radius:3px;box-shadow:0 0 1px rgba(0,0,0,.5)"></div>
<div style="left:1648.5px;top:1113.3px;width:40px;height:15px;background:linear-gradient(#a2a2a2,#8a8a8a 45%,#787878 55%,#6c6c6c);border-radius:4px 0 0 0"></div>
<div style="left:1648.5px;top:1129px;width:40px;height:36px;background:linear-gradient(#8c8c8c,#6e6e6e)"></div>
<div style="left:1655px;top:1133.5px;width:26px;height:26px;border:2.3px solid #1e1e1e;border-radius:4px;box-sizing:border-box;background:linear-gradient(#8e8e8e,#808080)"></div>
<div style="left:1662.5px;top:1141px;width:11px;height:11px;background:linear-gradient(#222,#000)"></div>
<div style="left:1662px;top:1116px;width:14px;height:9px;border-radius:50%;background:#787878"></div>
<svg style="left:1665px;top:1117.5px" width="8" height="5"><path d="M0 5h8L4 .3z" fill="#2a2a2a"/></svg>
<div style="left:1690.3px;top:1113.3px;width:37.1px;height:24.7px;background:linear-gradient(#a2a2a2,#8a8a8a 45%,#787878 55%,#6c6c6c);"></div>
<div style="left:1699.9px;top:1117px;width:17px;height:17px;border-radius:50%;background:radial-gradient(circle at 50% 35%,#7c7c7c,#767676 60%,#8c8c8c)"></div>
<div style="left:1729px;top:1113.3px;width:36.8px;height:24.7px;background:linear-gradient(#a2a2a2,#8a8a8a 45%,#787878 55%,#6c6c6c);"></div>
<div style="left:1738.6px;top:1117px;width:17px;height:17px;border-radius:50%;background:radial-gradient(circle at 50% 35%,#7c7c7c,#767676 60%,#8c8c8c)"></div>
<div style="left:1767.4px;top:1113.3px;width:35.8px;height:24.7px;background:linear-gradient(#a2a2a2,#8a8a8a 45%,#787878 55%,#6c6c6c);"></div>
<div style="left:1777px;top:1117px;width:17px;height:17px;border-radius:50%;background:radial-gradient(circle at 50% 35%,#7c7c7c,#767676 60%,#8c8c8c)"></div>
<div style="left:1804.8px;top:1113.3px;width:35.7px;height:24.7px;background:linear-gradient(#a2a2a2,#8a8a8a 45%,#787878 55%,#6c6c6c);"></div>
<div style="left:1814.4px;top:1117px;width:17px;height:17px;border-radius:50%;background:radial-gradient(circle at 50% 35%,#7c7c7c,#767676 60%,#8c8c8c)"></div>
<div style="left:1842.1px;top:1113.3px;width:36.3px;height:24.7px;background:linear-gradient(#a2a2a2,#8a8a8a 45%,#787878 55%,#6c6c6c);border-radius:0 4px 0 0;"></div>
<div style="left:1851.7px;top:1117px;width:17px;height:17px;border-radius:50%;background:radial-gradient(circle at 50% 35%,#7c7c7c,#767676 60%,#8c8c8c)"></div>
<svg style="left:1690px;top:1113px" width="190" height="25" fill="#2a2a2a"><rect x="15.5" y="9" width="7" height="7"/><path d="M54 8.2v8.6l7.5-4.3z"/><path d="M90 7.7h3v1.3h-1.6v7h1.6v1.3h-3zM102.5 7.7h-3v1.3h1.6v7h-1.6v1.3h3z"/><rect x="94" y="11.8" width="1.4" height="1.4"/><rect x="97" y="11.8" width="1.4" height="1.4"/><path d="M128.500 12.500c1.300-2 2.400-2.800 3.700-2.800a2.700 2.700 0 0 1 0 5.400c-1.300 0-2.400-.8-3.700-2.800c-1.300 2-2.400 2.800-3.700 2.800a2.700 2.700 0 0 1 0-5.400c1.300 0 2.400.8 3.700 2.800z" fill="none" stroke="#2a2a2a" stroke-width="1.4" transform="translate(3.700 0)"/><path d="M165.200 11.200a4.600 4.600 0 0 1 8-2.200l1.300-1.300v4h-4l1.500-1.500a2.900 2.900 0 0 0-5 1zM174.800 13.800a4.600 4.600 0 0 1-8 2.200l-1.300 1.300v-4h4l-1.500 1.500a2.900 2.900 0 0 0 5-1z" transform="translate(-.6 0)"/></svg>
<div style="left:1690px;top:1139.3px;width:113px;height:25.7px;background:linear-gradient(#a2a2a2,#8a8a8a 45%,#787878 55%,#6c6c6c)"></div>
<div style="left:1804.5px;top:1139.3px;width:113.5px;height:25.7px;background:linear-gradient(#a2a2a2,#8a8a8a 45%,#787878 55%,#6c6c6c);border-radius:0 4px 0 0"></div>
<div style="left:1707px;top:1143.5px;width:17px;height:17px;border-radius:50%;background:radial-gradient(circle at 50% 35%,#7c7c7c,#767676 60%,#8c8c8c)"></div>
<div style="left:1885.5px;top:1143.5px;width:17px;height:17px;border-radius:50%;background:radial-gradient(circle at 50% 35%,#7c7c7c,#767676 60%,#8c8c8c)"></div>
<div style="left:0px;top:0px;width:1920px;height:1166px;border:1px solid #7c7c7c;box-sizing:border-box;border-top-color:#8c8c8c"></div>
<svg style="left:0;top:0" width="1920" height="1166" viewBox="0 0 1920 1166"><rect x="1719.5" y="512.6" width="16" height="16" fill="none" stroke="#fff" stroke-width="2"/><rect x="1418.9" y="331.2" width="16" height="16" fill="none" stroke="#fff" stroke-width="2"/><rect x="1286.3" y="694.1" width="16" height="16" fill="none" stroke="#fff" stroke-width="2"/><rect x="1524.4" y="394.8" width="16" height="16" fill="none" stroke="#fff" stroke-width="2"/><rect x="1352.2" y="513.5" width="16" height="16" fill="none" stroke="#fff" stroke-width="2"/><rect x="1437.4" y="630.8" width="16" height="16" fill="none" stroke="#fff" stroke-width="2"/><rect x="1429.6" y="512.8" width="17" height="17" fill="none" stroke="#000" stroke-width="2.2"/><circle cx="1679.5" cy="524.2" r="5" fill="#a01414" stroke="#000" stroke-width="1.5"/><circle cx="1465.0" cy="334.0" r="5" fill="#14a014" stroke="#000" stroke-width="1.5"/><circle cx="1297.6" cy="703.4" r="5" fill="#0a0ac8" stroke="#000" stroke-width="1.5"/><circle cx="1374.7" cy="533.2" r="5" fill="#14a0a0" stroke="#000" stroke-width="1.5"/><circle cx="1393.4" cy="658.7" r="5" fill="#c010c0" stroke="#000" stroke-width="1.5"/><circle cx="1528.7" cy="389.3" r="5" fill="#a0a00a" stroke="#000" stroke-width="1.5"/><circle cx="1422.7" cy="532.1" r="5" fill="#fff" stroke="#000" stroke-width="1.5"/><circle cx="1422.9" cy="531.6" r="5" fill="#fff" stroke="#000" stroke-width="1.5"/><rect x="1764" y="283" width="16" height="16" fill="none" stroke="#000" stroke-width="2"/><circle cx="1686" cy="358.5" r="5" fill="#d8d8d8" stroke="#000" stroke-width="1.3"/><circle cx="1688" cy="355.4" r="5" fill="#fff" stroke="#000" stroke-width="1.3"/>
<text transform="translate(25.81 16.9) scale(0.8356 1)" font-size="11.8" fill="#9a9a9a">Calman 2023 Calman Ultimate for Business 247 Days Remaining&#160; - Untitled</text>
<text transform="translate(41.78 43.5) scale(1.2178 1)" font-size="18.8" fill="#fff">calman</text>
<text transform="translate(30.05 72) scale(0.9002 1)" font-size="10.2" fill="#f0f0f0" font-weight="bold">History 1</text>
<text transform="translate(87.2 73.6)" font-size="11" fill="#707070" text-anchor="middle">+</text>
<text transform="translate(1514.02 65.8) scale(0.8473 1)" font-size="10.6" fill="#f4f4f4">X-Rite i1Pro 3</text>
<text transform="translate(1513.44 77.5) scale(0.8947 1)" font-size="10.6" fill="#f4f4f4">Direct View</text>
<text transform="translate(1638.66 65.8) scale(0.8758 1)" font-size="10.6" fill="#f4f4f4">Mobile Forge</text>
<text transform="translate(1751.96 65.8) scale(0.8773 1)" font-size="10.6" fill="#f4f4f4">Direct Display Control</text>
<text transform="translate(1614 71.3) scale(0.95 1)" font-size="8.2" fill="#fff" text-anchor="middle" font-weight="bold">691</text>
<text transform="translate(27.48 194.7) scale(0.9328 1)" font-size="47.5" fill="#f2f2f2">Colorspace</text>
<text transform="translate(170.25 251.7) scale(1.0611 1)" font-size="15.9" fill="#dcdcdc">DeltaE 2000</text>
<text transform="translate(23.1 757.5)" font-size="15.6" fill="#dcdcdc" text-anchor="middle">0</text>
<text transform="translate(74.5 757.5)" font-size="15.6" fill="#dcdcdc" text-anchor="middle">2</text>
<text transform="translate(125.9 757.5)" font-size="15.6" fill="#dcdcdc" text-anchor="middle">4</text>
<text transform="translate(177.3 757.5)" font-size="15.6" fill="#dcdcdc" text-anchor="middle">6</text>
<text transform="translate(228.7 757.5)" font-size="15.6" fill="#dcdcdc" text-anchor="middle">8</text>
<text transform="translate(280.1 757.5)" font-size="15.6" fill="#dcdcdc" text-anchor="middle">10</text>
<text transform="translate(331.5 757.5)" font-size="15.6" fill="#dcdcdc" text-anchor="middle">12</text>
<text transform="translate(382.9 757.5)" font-size="15.6" fill="#dcdcdc" text-anchor="middle">14</text>
<text transform="translate(462.2 187.45)" font-size="15.6" fill="#dcdcdc" text-anchor="end">15</text>
<text transform="translate(462.2 247.9)" font-size="15.6" fill="#dcdcdc" text-anchor="end">10</text>
<text transform="translate(462.2 308.35)" font-size="15.6" fill="#dcdcdc" text-anchor="end">5</text>
<text transform="translate(462.2 368.8)" font-size="15.6" fill="#dcdcdc" text-anchor="end">0</text>
<text transform="translate(462.2 429.25)" font-size="15.6" fill="#dcdcdc" text-anchor="end">-5</text>
<text transform="translate(462.2 489.7)" font-size="15.6" fill="#dcdcdc" text-anchor="end">-10</text>
<text transform="translate(462.2 550.15)" font-size="15.6" fill="#dcdcdc" text-anchor="end">-15</text>
<text transform="translate(510.54 173) scale(1.0659 1)" font-size="15.9" fill="#dcdcdc">Delta L</text>
<text transform="translate(530.01 561.7) scale(1.0735 1)" font-size="15.9" fill="#dcdcdc">100W</text>
<text transform="translate(689.2 187.45)" font-size="15.6" fill="#dcdcdc" text-anchor="end">15</text>
<text transform="translate(689.2 247.9)" font-size="15.6" fill="#dcdcdc" text-anchor="end">10</text>
<text transform="translate(689.2 308.35)" font-size="15.6" fill="#dcdcdc" text-anchor="end">5</text>
<text transform="translate(689.2 368.8)" font-size="15.6" fill="#dcdcdc" text-anchor="end">0</text>
<text transform="translate(689.2 429.25)" font-size="15.6" fill="#dcdcdc" text-anchor="end">-5</text>
<text transform="translate(689.2 489.7)" font-size="15.6" fill="#dcdcdc" text-anchor="end">-10</text>
<text transform="translate(689.2 550.15)" font-size="15.6" fill="#dcdcdc" text-anchor="end">-15</text>
<text transform="translate(737.61 173) scale(1.0130 1)" font-size="15.9" fill="#dcdcdc">Delta C</text>
<text transform="translate(757.01 561.7) scale(1.0735 1)" font-size="15.9" fill="#dcdcdc">100W</text>
<text transform="translate(916.2 187.45)" font-size="15.6" fill="#dcdcdc" text-anchor="end">15</text>
<text transform="translate(916.2 247.9)" font-size="15.6" fill="#dcdcdc" text-anchor="end">10</text>
<text transform="translate(916.2 308.35)" font-size="15.6" fill="#dcdcdc" text-anchor="end">5</text>
<text transform="translate(916.2 368.8)" font-size="15.6" fill="#dcdcdc" text-anchor="end">0</text>
<text transform="translate(916.2 429.25)" font-size="15.6" fill="#dcdcdc" text-anchor="end">-5</text>
<text transform="translate(916.2 489.7)" font-size="15.6" fill="#dcdcdc" text-anchor="end">-10</text>
<text transform="translate(916.2 550.15)" font-size="15.6" fill="#dcdcdc" text-anchor="end">-15</text>
<text transform="translate(964.60 173) scale(1.0257 1)" font-size="15.9" fill="#dcdcdc">Delta H</text>
<text transform="translate(984.01 561.7) scale(1.0735 1)" font-size="15.9" fill="#dcdcdc">100W</text>
<text transform="translate(469.30 759.4) scale(1.1007 1)" font-size="13.7" fill="#fff" stroke="#fff" stroke-width=".22">White</text>
<text transform="translate(558.51 759.4) scale(0.9971 1)" font-size="13.7" fill="#fff" stroke="#fff" stroke-width=".22">Red</text>
<text transform="translate(634.39 759.4) scale(1.0404 1)" font-size="13.7" fill="#fff" stroke="#fff" stroke-width=".22">Green</text>
<text transform="translate(722.44 759.4) scale(1.0570 1)" font-size="13.7" fill="#fff" stroke="#fff" stroke-width=".22">Blue</text>
<text transform="translate(804.62 759.4) scale(0.9925 1)" font-size="13.7" fill="#fff" stroke="#fff" stroke-width=".22">Cyan</text>
<text transform="translate(874.74 759.4) scale(1.0618 1)" font-size="13.7" fill="#fff" stroke="#fff" stroke-width=".22">Magenta</text>
<text transform="translate(966.32 759.4) scale(1.0351 1)" font-size="13.7" fill="#fff" stroke="#fff" stroke-width=".22">Yellow</text>
<text transform="translate(1050.68 759.4) scale(1.0598 1)" font-size="13.7" fill="#fff" stroke="#fff" stroke-width=".22">100W</text>
<text transform="translate(446.8 643.3) rotate(-90) scale(1.0746 1)" font-size="13.7" fill="#fff" stroke="#fff" stroke-width=".22">Actual</text>
<text transform="translate(446.8 729.189) rotate(-90) scale(1.0547 1)" font-size="13.7" fill="#fff" stroke="#fff" stroke-width=".22">Target</text>
<text transform="translate(1474.99 172.2) scale(1.0126 1)" font-size="15.9" fill="#dcdcdc">CIE 1931 xy</text>
<text transform="translate(1161.6 769)" font-size="15.6" fill="#dcdcdc" text-anchor="middle">0</text>
<text transform="translate(1153.8 749.5)" font-size="15.6" fill="#dcdcdc" text-anchor="end">0</text>
<text transform="translate(1250 769)" font-size="15.6" fill="#dcdcdc" text-anchor="middle">0,1</text>
<text transform="translate(1153.8 682.3)" font-size="15.6" fill="#dcdcdc" text-anchor="end">0,1</text>
<text transform="translate(1338.4 769)" font-size="15.6" fill="#dcdcdc" text-anchor="middle">0,2</text>
<text transform="translate(1153.8 615.1)" font-size="15.6" fill="#dcdcdc" text-anchor="end">0,2</text>
<text transform="translate(1426.8 769)" font-size="15.6" fill="#dcdcdc" text-anchor="middle">0,3</text>
<text transform="translate(1153.8 547.9)" font-size="15.6" fill="#dcdcdc" text-anchor="end">0,3</text>
<text transform="translate(1515.2 769)" font-size="15.6" fill="#dcdcdc" text-anchor="middle">0,4</text>
<text transform="translate(1153.8 480.7)" font-size="15.6" fill="#dcdcdc" text-anchor="end">0,4</text>
<text transform="translate(1603.6 769)" font-size="15.6" fill="#dcdcdc" text-anchor="middle">0,5</text>
<text transform="translate(1153.8 413.5)" font-size="15.6" fill="#dcdcdc" text-anchor="end">0,5</text>
<text transform="translate(1692 769)" font-size="15.6" fill="#dcdcdc" text-anchor="middle">0,6</text>
<text transform="translate(1153.8 346.3)" font-size="15.6" fill="#dcdcdc" text-anchor="end">0,6</text>
<text transform="translate(1780.4 769)" font-size="15.6" fill="#dcdcdc" text-anchor="middle">0,7</text>
<text transform="translate(1153.8 279.1)" font-size="15.6" fill="#dcdcdc" text-anchor="end">0,7</text>
<text transform="translate(1868.8 769)" font-size="15.6" fill="#dcdcdc" text-anchor="middle">0,8</text>
<text transform="translate(1153.8 211.9)" font-size="15.6" fill="#dcdcdc" text-anchor="end">0,8</text>
<text transform="translate(1612.87 731.9) scale(0.9606 1)" font-size="23.6" fill="#fff">Gamut Coverage:&#160; 81,2%</text>
<text transform="translate(16.56 851.8) scale(1.0432 1)" font-size="33.3" fill="#f2f2f2">Current Reading</text>
<text transform="translate(18.01 901) scale(0.9961 1)" font-size="28.8" fill="#f2f2f2">x: 0,2955</text>
<text transform="translate(18.30 948.2) scale(0.9961 1)" font-size="28.8" fill="#f2f2f2">y: 0,3137</text>
<text transform="translate(18.01 995.4) scale(0.9954 1)" font-size="28.8" fill="#f2f2f2">fL: 142,58</text>
<text transform="translate(17.09 1042.6) scale(1.0495 1)" font-size="28.8" fill="#f2f2f2">cd/m²: 488,5</text>
<text transform="translate(402.8 835.4)" font-size="15.6" fill="#dcdcdc" text-anchor="end">110</text>
<text transform="translate(402.8 887.2)" font-size="15.6" fill="#dcdcdc" text-anchor="end">105</text>
<text transform="translate(402.8 939)" font-size="15.6" fill="#dcdcdc" text-anchor="end">100</text>
<text transform="translate(402.8 990.8)" font-size="15.6" fill="#dcdcdc" text-anchor="end">95</text>
<text transform="translate(402.8 1042.6)" font-size="15.6" fill="#dcdcdc" text-anchor="end">90</text>
<text transform="translate(489.13 823.2) scale(0.9970 1)" font-size="15.9" fill="#dcdcdc">RGB Balance</text>
<text transform="translate(532.01 1055.4) scale(1.0686 1)" font-size="15.9" fill="#dcdcdc">100W</text>
<text transform="translate(851.00 834.6) scale(0.7806 1)" font-size="24.3" fill="#fff">White</text>
<text transform="translate(942.29 834.6) scale(0.7245 1)" font-size="24.3" fill="#fff">Red</text>
<text transform="translate(1017.50 834.6) scale(0.7436 1)" font-size="24.3" fill="#fff">Green</text>
<text transform="translate(1107.93 834.6) scale(0.7552 1)" font-size="24.3" fill="#fff">Blue</text>
<text transform="translate(1190.54 834.6) scale(0.7110 1)" font-size="24.3" fill="#fff">Cyan</text>
<text transform="translate(1259.52 834.6) scale(0.7604 1)" font-size="24.3" fill="#fff">Magenta</text>
<text transform="translate(1355.94 834.6) scale(0.7429 1)" font-size="24.3" fill="#fff">Yellow</text>
<text transform="translate(1446.81 834.6) scale(0.7590 1)" font-size="24.3" fill="#fff">100W</text>
<text transform="translate(737.80 877.9) scale(0.7705 1)" font-size="24.3" fill="#fff" font-weight="bold">x: CIE31</text>
<text transform="translate(834.4 877.9) scale(0.783 1)" font-size="24.3" fill="#fff">0,2952</text>
<text transform="translate(924.1 877.9) scale(0.783 1)" font-size="24.3" fill="#fff">0,5858</text>
<text transform="translate(1003.2 877.9) scale(0.783 1)" font-size="24.3" fill="#fff">0,3431</text>
<text transform="translate(1092 877.9) scale(0.783 1)" font-size="24.3" fill="#fff">0,1537</text>
<text transform="translate(1171 877.9) scale(0.783 1)" font-size="24.3" fill="#fff">0,2409</text>
<text transform="translate(1259.9 877.9) scale(0.783 1)" font-size="24.3" fill="#fff">0,2621</text>
<text transform="translate(1341.9 877.9) scale(0.783 1)" font-size="24.3" fill="#fff">0,4152</text>
<text transform="translate(1430.7 877.9) scale(0.783 1)" font-size="24.3" fill="#fff">0,2955</text>
<text transform="translate(737.80 918.9) scale(0.7705 1)" font-size="24.3" fill="#eee" font-weight="bold">y: CIE31</text>
<text transform="translate(834.4 918.9) scale(0.783 1)" font-size="24.3" fill="#eee">0,3129</text>
<text transform="translate(924.1 918.9) scale(0.783 1)" font-size="24.3" fill="#eee">0,3247</text>
<text transform="translate(1003.2 918.9) scale(0.783 1)" font-size="24.3" fill="#eee">0,6078</text>
<text transform="translate(1092 918.9) scale(0.783 1)" font-size="24.3" fill="#eee">0,0580</text>
<text transform="translate(1171 918.9) scale(0.783 1)" font-size="24.3" fill="#eee">0,3113</text>
<text transform="translate(1259.9 918.9) scale(0.783 1)" font-size="24.3" fill="#eee">0,1245</text>
<text transform="translate(1341.9 918.9) scale(0.783 1)" font-size="24.3" fill="#eee">0,5254</text>
<text transform="translate(1430.7 918.9) scale(0.783 1)" font-size="24.3" fill="#eee">0,3137</text>
<text transform="translate(737.62 961.7) scale(0.7534 1)" font-size="24.3" fill="#fff" font-weight="bold">Y</text>
<text transform="translate(834.4 961.7) scale(0.783 1)" font-size="24.3" fill="#fff">267,8877</text>
<text transform="translate(924.1 961.7) scale(0.783 1)" font-size="24.3" fill="#fff">42,9046</text>
<text transform="translate(1003.2 961.7) scale(0.783 1)" font-size="24.3" fill="#fff">197,4545</text>
<text transform="translate(1092 961.7) scale(0.783 1)" font-size="24.3" fill="#fff">22,6969</text>
<text transform="translate(1171 961.7) scale(0.783 1)" font-size="24.3" fill="#fff">224,6238</text>
<text transform="translate(1259.9 961.7) scale(0.783 1)" font-size="24.3" fill="#fff">65,1575</text>
<text transform="translate(1341.9 961.7) scale(0.783 1)" font-size="24.3" fill="#fff">240,2149</text>
<text transform="translate(1430.7 961.7) scale(0.783 1)" font-size="24.3" fill="#fff">488,5003</text>
<text transform="translate(737.60 1002.1) scale(0.8094 1)" font-size="24.3" fill="#eee" font-weight="bold">Target Y</text>
<text transform="translate(834.4 1002.1) scale(0.783 1)" font-size="24.3" fill="#eee">267,8877</text>
<text transform="translate(924.1 1002.1) scale(0.783 1)" font-size="24.3" fill="#eee">56,9679</text>
<text transform="translate(1003.2 1002.1) scale(0.783 1)" font-size="24.3" fill="#eee">191,5821</text>
<text transform="translate(1092 1002.1) scale(0.783 1)" font-size="24.3" fill="#eee">19,3376</text>
<text transform="translate(1171 1002.1) scale(0.783 1)" font-size="24.3" fill="#eee">210,9198</text>
<text transform="translate(1259.9 1002.1) scale(0.783 1)" font-size="24.3" fill="#eee">76,3055</text>
<text transform="translate(1341.9 1002.1) scale(0.783 1)" font-size="24.3" fill="#eee">248,5501</text>
<text transform="translate(1430.7 1002.1) scale(0.783 1)" font-size="24.3" fill="#eee">488,5003</text>
<text transform="translate(737.01 1043.9) scale(0.8161 1)" font-size="24.3" fill="#fff" font-weight="bold">ΔE 2000</text>
<text transform="translate(834.4 1043.9) scale(0.783 1)" font-size="24.3" fill="#fff">6,7424</text>
<text transform="translate(924.1 1043.9) scale(0.783 1)" font-size="24.3" fill="#fff">9,0584</text>
<text transform="translate(1003.2 1043.9) scale(0.783 1)" font-size="24.3" fill="#fff">7,0228</text>
<text transform="translate(1092 1043.9) scale(0.783 1)" font-size="24.3" fill="#fff">2,4959</text>
<text transform="translate(1171 1043.9) scale(0.783 1)" font-size="24.3" fill="#fff">7,1603</text>
<text transform="translate(1259.9 1043.9) scale(0.783 1)" font-size="24.3" fill="#fff">6,7635</text>
<text transform="translate(1341.9 1043.9) scale(0.783 1)" font-size="24.3" fill="#fff">2,7447</text>
<text transform="translate(1430.7 1043.9) scale(0.783 1)" font-size="24.3" fill="#fff">7,7755</text>
<text transform="translate(64.7 1159.7) scale(0.95 1)" font-size="9.6" fill="#2a2a2a" text-anchor="middle" font-weight="bold">White</text>
<text transform="translate(191.9 1159.7) scale(0.95 1)" font-size="9.6" fill="#2a2a2a" text-anchor="middle" font-weight="bold">Red</text>
<text transform="translate(319.1 1159.7) scale(0.95 1)" font-size="9.6" fill="#2a2a2a" text-anchor="middle" font-weight="bold">Green</text>
<text transform="translate(446.3 1159.7) scale(0.95 1)" font-size="9.6" fill="#2a2a2a" text-anchor="middle" font-weight="bold">Blue</text>
<text transform="translate(573.5 1159.7) scale(0.95 1)" font-size="9.6" fill="#2a2a2a" text-anchor="middle" font-weight="bold">Cyan</text>
<text transform="translate(700.7 1159.7) scale(0.95 1)" font-size="9.6" fill="#2a2a2a" text-anchor="middle" font-weight="bold">Magenta</text>
<text transform="translate(827.9 1159.7) scale(0.95 1)" font-size="9.6" fill="#2a2a2a" text-anchor="middle" font-weight="bold">Yellow</text>
<text transform="translate(955.1 1159.7) scale(0.95 1)" font-size="9.6" fill="#fff" text-anchor="middle" font-weight="bold">100W</text>
<text transform="translate(1715.5 1157)" font-size="14" fill="#2a2a2a" text-anchor="middle">«</text>
<text transform="translate(1894 1157)" font-size="14" fill="#2a2a2a" text-anchor="middle">»</text>
<text transform="translate(1736.44 1158.3) scale(1.0376 1)" font-size="18.8" fill="#262626" stroke="#262626" stroke-width=".22">Back</text>
<text transform="translate(1825.77 1158.3) scale(1.1508 1)" font-size="18.8" fill="#262626" stroke="#262626" stroke-width=".22">Next</text>
<text transform="translate(1897.5 1151.5) scale(0.94 1)" font-size="56" fill="#f01010" text-anchor="middle" font-weight="bold" style="font-family:'Liberation Serif',serif">*</text></svg>
</body></html>
